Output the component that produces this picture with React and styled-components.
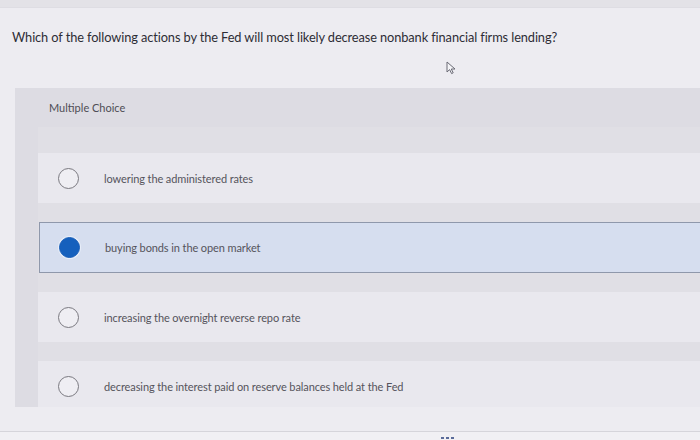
import React from "react";
import styled, { createGlobalStyle } from "styled-components";

const GlobalStyle = createGlobalStyle`
  html, body { margin: 0; padding: 0; }
  body {
    background: #edecf1;
    font-family: "Lato", "Liberation Sans", sans-serif;
    width: 700px;
    height: 440px;
    overflow: hidden;
  }
`;

const Page = styled.div`
  position: relative;
  width: 700px;
  height: 440px;
  display: flex;
  flex-direction: column;
`;

const TopStrip = styled.div`
  height: 7px;
  background: #e3e2e7;
  border-bottom: 1px solid #dedde3;
`;

const Question = styled.div`
  margin: 20px 0 0 12px;
  height: 18px;
  line-height: 18px;
  font-size: 12.8px;
  color: #2e2d35;
  letter-spacing: -0.1px;
`;

const Cursor = styled.svg`
  position: absolute;
  left: 446px;
  top: 61px;
`;

const Panel = styled.div`
  margin: 42px 0 0 15px;
  height: 319px;
  flex-shrink: 0;
  background: #dddce3;
  display: flex;
  flex-direction: column;
  overflow: hidden;
`;

const PanelHeader = styled.div`
  height: 39px;
  flex-shrink: 0;
  display: flex;
  align-items: center;
  padding-left: 34px;
  font-size: 11px;
  color: #4e4d55;
`;

const List = styled.div`
  flex: 1;
  min-height: 0;
  display: flex;
  flex-direction: column;
  gap: 19px;
  padding: 26px 0 0 23px;
  background: linear-gradient(90deg, #dddce3 0, #dddce3 23px, #e0dfe5 23px);
`;

const Row = styled.div`
  box-sizing: border-box;
  flex-shrink: 0;
  height: ${(p) => (p.$selected ? 51 : 50)}px;
  display: flex;
  align-items: center;
  padding-left: ${(p) => (p.$selected ? 19 : 20)}px;
  margin-left: ${(p) => (p.$selected ? 1 : 0)}px;
  background: ${(p) => (p.$selected ? "#d6deef" : "#e9e8ee")};
  border: ${(p) => (p.$selected ? "1px solid #8f98ab" : "none")};
  border-right: none;
`;

const Radio = styled.span`
  box-sizing: border-box;
  width: 21px;
  height: 21px;
  border-radius: 50%;
  flex-shrink: 0;
  background: ${(p) => (p.$checked ? "#1560bd" : "#efeef3")};
  border: ${(p) => (p.$checked ? "1px solid #1a5fb8" : "1.3px solid #7a7980")};
  box-shadow: ${(p) => (p.$checked ? "0 0 0 1px #e8eef9" : "none")};
`;

const Label = styled.span`
  margin-left: 25px;
  font-size: 11px;
  color: #55545c;
  letter-spacing: -0.1px;
`;

const Footer = styled.div`
  flex: 1;
  display: flex;
  flex-direction: column;
  justify-content: flex-end;
  align-items: center;
`;

const FooterBar = styled.div`
  width: 100%;
  height: 9px;
  border-top: 1px solid #d6d5db;
  background: #f1f0f4;
  display: flex;
  justify-content: center;
  padding-left: 196px;
  box-sizing: border-box;
`;

const Dots = styled.span`
  margin-top: 5px;
  width: 14px;
  height: 2px;
  background: repeating-linear-gradient(90deg, #5a6b9a 0 3px, transparent 3px 5px);
`;

const options = [
  "lowering the administered rates",
  "buying bonds in the open market",
  "increasing the overnight reverse repo rate",
  "decreasing the interest paid on reserve balances held at the Fed",
];

export default function App() {
  return (
    <>
      <GlobalStyle />
      <Page>
        <TopStrip />
        <Question>
          Which of the following actions by the Fed will most likely decrease nonbank financial firms lending?
        </Question>
        <Cursor width="12" height="14" viewBox="0 0 12 14">
          <path d="M1 1 L1 11 L3.6 8.6 L5.6 12.6 L7.2 11.8 L5.3 8 L9 8 Z" fill="#f4f4f7" stroke="#6a6a75" strokeWidth="1" strokeLinejoin="round" />
        </Cursor>
        <Panel>
          <PanelHeader>Multiple Choice</PanelHeader>
          <List>
            {options.map((o, i) => (
              <Row key={o} $selected={i === 1}>
                <Radio $checked={i === 1} />
                <Label>{o}</Label>
              </Row>
            ))}
          </List>
        </Panel>
        <Footer>
          <FooterBar>
            <Dots />
          </FooterBar>
        </Footer>
      </Page>
    </>
  );
}
